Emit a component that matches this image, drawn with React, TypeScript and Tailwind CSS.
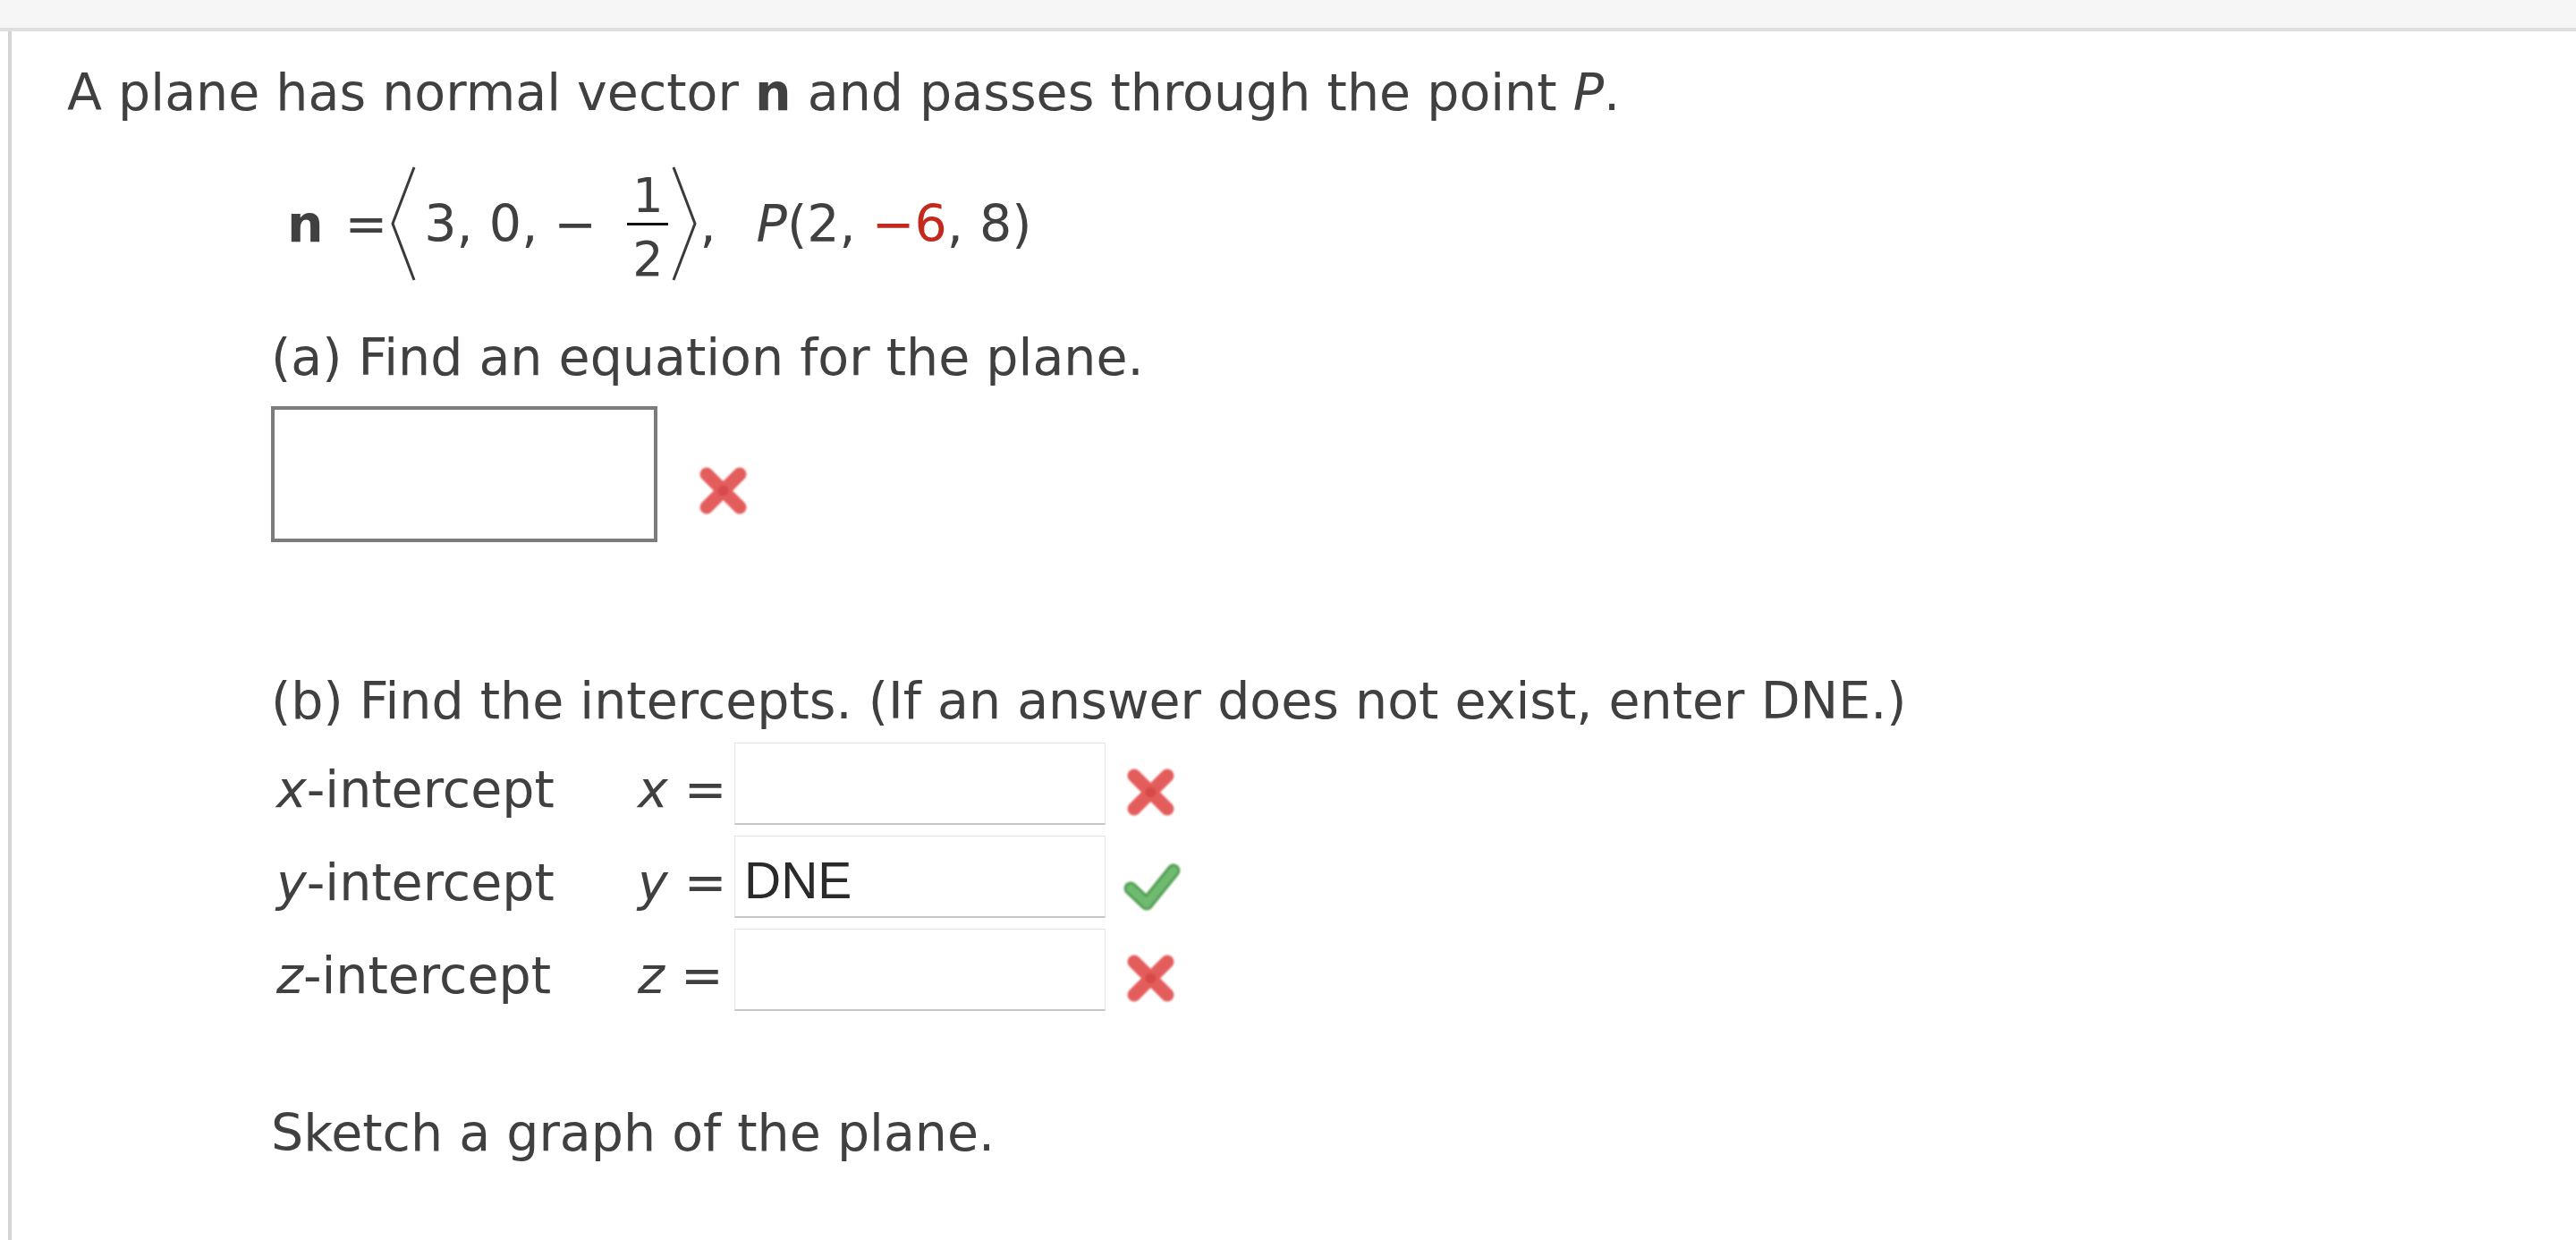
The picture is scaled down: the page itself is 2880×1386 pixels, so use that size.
import React from "react";

const font = { fontFamily: '"DejaVu Sans", Verdana, sans-serif' };

function XIcon() {
  return (
    <svg width="57" height="57" viewBox="0 0 57 57" className="block">
      <g style={{ filter: "blur(0.9px)" }}>
        <line x1="10" y1="10" x2="47" y2="47" stroke="#e45d5d" strokeWidth="15" strokeLinecap="round" />
        <line x1="47" y1="10" x2="10" y2="47" stroke="#e45d5d" strokeWidth="15" strokeLinecap="round" />
        <circle cx="28.5" cy="28.5" r="6" fill="#d84a4a" />
      </g>
    </svg>
  );
}

function CheckIcon() {
  return (
    <svg width="66" height="57" viewBox="0 0 66 57" className="block">
      <g style={{ filter: "blur(0.9px)" }}>
        <polyline points="9,30 27,47 57,10" fill="none" stroke="#559f55" strokeWidth="15" strokeLinecap="round" strokeLinejoin="round" />
        <polyline points="9,30 27,47 57,10" fill="none" stroke="#6fbb6f" strokeWidth="9" strokeLinecap="round" strokeLinejoin="round" />
      </g>
    </svg>
  );
}

function Bracket({ right }: { right?: boolean }) {
  return (
    <svg width="28" height="130" viewBox="0 0 28 130" className="block">
      {right ? (
        <polyline points="2,2 26,65 2,128" fill="none" stroke="#3a3a3a" strokeWidth="3" />
      ) : (
        <polyline points="26,2 2,65 26,128" fill="none" stroke="#3a3a3a" strokeWidth="3" />
      )}
    </svg>
  );
}

function Row({ v, value, ok }: { v: string; value?: string; ok?: boolean }) {
  return (
    <div className="flex items-start h-[92px]">
      <div className="w-[404px] leading-[68px] mt-[18px] whitespace-nowrap">
        <i>{v}</i>-intercept
      </div>
      <div className="w-[108px] leading-[68px] mt-[18px] whitespace-nowrap">
        <i>{v}</i> =
      </div>
      <div className="w-[415px] h-[92px] bg-white border border-[#e4e4e4] border-b-2 border-b-[#c6c6c6] pl-[10px]">
        {value ? (
          <div
            className="leading-[68px] pt-[15px] text-[57px] text-[#2a2a2a]"
            style={{ fontFamily: '"Liberation Sans", Arial, sans-serif' }}
          >
            {value}
          </div>
        ) : null}
      </div>
      <div className={ok ? "ml-[19px] mt-[29px]" : "ml-[22px] mt-[27px]"}>{ok ? <CheckIcon /> : <XIcon />}</div>
    </div>
  );
}

export default function App() {
  return (
    <div className="w-[2880px] h-[1386px] bg-white overflow-hidden text-[#404040] text-[57px]" style={font}>
      <div className="h-[31px] bg-[#f6f6f6]" />
      <div className="h-[4px] bg-[#dedede]" />
      <div className="ml-[9px] h-[1351px] border-l-4 border-[#d4d4d4] pl-[62px]">
        <div className="pt-[34px] leading-[68px] whitespace-nowrap">
          A plane has normal vector <b>n</b> and passes through the point <i>P</i>.
        </div>

        <div className="pl-[228px]">
          <div className="mt-[47px] h-[132px] flex items-center ml-[18px] leading-[57px] whitespace-nowrap">
            <b>n</b>
            <span className="ml-[24px]">=</span>
            <span className="ml-[4px]">
              <Bracket />
            </span>
            <span className="ml-[9px]">3, 0, −</span>
            <span className="ml-[30px] flex flex-col items-center pt-[8px] text-[54px] leading-[52px]">
              <span className="mb-[4px] px-[10px]">1</span>
              <span className="block w-[46px] h-[3px] bg-[#111]" />
              <span className="mt-[12px]">2</span>
            </span>
            <span>
              <Bracket right />
            </span>
            <span className="ml-[3px]">,</span>
            <span className="ml-[45px]">
              <i>P</i>(2, <span className="text-[#c5281c]">−6</span>, 8)
            </span>
          </div>

          <div className="mt-[49px] leading-[68px] whitespace-nowrap">(a) Find an equation for the plane.</div>

          <div className="mt-[21px] flex items-start">
            <div className="w-[432px] h-[152px] border-4 border-[#7c7c7c] bg-white" />
            <div className="ml-[45px] mt-[66px]">
              <XIcon />
            </div>
          </div>

          <div className="mt-[143px] leading-[68px] whitespace-nowrap">
            (b) Find the intercepts. (If an answer does not exist, enter DNE.)
          </div>

          <div className="mt-[13px] ml-[6px] flex flex-col gap-[12px]">
            <Row v="x" />
            <Row v="y" value="DNE" ok />
            <Row v="z" />
          </div>

          <div className="mt-[102px] leading-[68px] whitespace-nowrap">Sketch a graph of the plane.</div>
        </div>
      </div>
    </div>
  );
}
